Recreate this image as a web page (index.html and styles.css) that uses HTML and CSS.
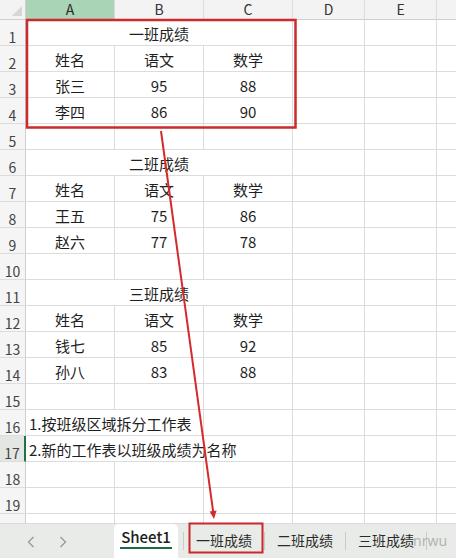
FILE: index.html
```html
<!DOCTYPE html>
<html lang="zh">
<head>
<meta charset="utf-8">
<title>Sheet</title>
<link rel="stylesheet" href="styles.css">
</head>
<body>
<div class="app">
  <div class="grid">
    <div class="corner"><span class="tri"></span></div>
    <div class="ch sel">A</div><div class="ch">B</div><div class="ch">C</div><div class="ch">D</div><div class="ch">E</div><div class="ch"></div>

    <div class="rh">1</div><div class="c m3">一班成绩</div><div class="c"></div><div class="c"></div><div class="c"></div>
    <div class="rh">2</div><div class="c">姓名</div><div class="c">语文</div><div class="c">数学</div><div class="c"></div><div class="c"></div><div class="c"></div>
    <div class="rh">3</div><div class="c">张三</div><div class="c">95</div><div class="c">88</div><div class="c"></div><div class="c"></div><div class="c"></div>
    <div class="rh">4</div><div class="c">李四</div><div class="c">86</div><div class="c">90</div><div class="c"></div><div class="c"></div><div class="c"></div>
    <div class="rh">5</div><div class="c"></div><div class="c"></div><div class="c"></div><div class="c"></div><div class="c"></div><div class="c"></div>
    <div class="rh">6</div><div class="c m3">二班成绩</div><div class="c"></div><div class="c"></div><div class="c"></div>
    <div class="rh">7</div><div class="c">姓名</div><div class="c">语文</div><div class="c">数学</div><div class="c"></div><div class="c"></div><div class="c"></div>
    <div class="rh">8</div><div class="c">王五</div><div class="c">75</div><div class="c">86</div><div class="c"></div><div class="c"></div><div class="c"></div>
    <div class="rh">9</div><div class="c">赵六</div><div class="c">77</div><div class="c">78</div><div class="c"></div><div class="c"></div><div class="c"></div>
    <div class="rh">10</div><div class="c"></div><div class="c"></div><div class="c"></div><div class="c"></div><div class="c"></div><div class="c"></div>
    <div class="rh">11</div><div class="c m3">三班成绩</div><div class="c"></div><div class="c"></div><div class="c"></div>
    <div class="rh">12</div><div class="c">姓名</div><div class="c">语文</div><div class="c">数学</div><div class="c"></div><div class="c"></div><div class="c"></div>
    <div class="rh">13</div><div class="c">钱七</div><div class="c">85</div><div class="c">92</div><div class="c"></div><div class="c"></div><div class="c"></div>
    <div class="rh">14</div><div class="c">孙八</div><div class="c">83</div><div class="c">88</div><div class="c"></div><div class="c"></div><div class="c"></div>
    <div class="rh">15</div><div class="c"></div><div class="c"></div><div class="c"></div><div class="c"></div><div class="c"></div><div class="c"></div>
    <div class="rh">16</div><div class="c m2 left">1.按班级区域拆分工作表</div><div class="c"></div><div class="c"></div><div class="c"></div><div class="c"></div>
    <div class="rh rsel">17</div><div class="c m3 left">2.新的工作表以班级成绩为名称</div><div class="c"></div><div class="c"></div><div class="c"></div>
    <div class="rh">18</div><div class="c"></div><div class="c"></div><div class="c"></div><div class="c"></div><div class="c"></div><div class="c"></div>
    <div class="rh">19</div><div class="c"></div><div class="c"></div><div class="c"></div><div class="c"></div><div class="c"></div><div class="c"></div>
    <div class="rh"></div><div class="c"></div><div class="c"></div><div class="c"></div><div class="c"></div><div class="c"></div><div class="c"></div>
  </div>

  <div class="tabbar">
    <div class="nav">
      <svg class="chev" width="8" height="12" viewBox="0 0 8 12"><path d="M6.5 1 L1.5 6 L6.5 11" fill="none" stroke="#9a9a9a" stroke-width="1.4"/></svg>
      <svg class="chev" width="8" height="12" viewBox="0 0 8 12"><path d="M1.5 1 L6.5 6 L1.5 11" fill="none" stroke="#9a9a9a" stroke-width="1.4"/></svg>
    </div>
    <div class="tab active"><span class="tabtext">Sheet1</span></div>
    <div class="sep"></div>
    <div class="tab">一班成绩</div>
    <div class="sep"></div>
    <div class="tab">二班成绩</div>
    <div class="sep"></div>
    <div class="tab">三班成绩</div>
    <div class="sep"></div>
    <span class="wm">nrwu</span>
  </div>

  <svg class="overlay" width="456" height="558" viewBox="0 0 456 558">
    <rect x="27" y="20" width="268.5" height="107.5" fill="none" stroke="#cc2a2c" stroke-width="2.5"/>
    <line x1="161" y1="131" x2="213.2" y2="512" stroke="#d42a2c" stroke-width="2"/>
    <polygon points="214,519 216.6,510.4 209.6,511.4" fill="#d42a2c"/>
    <rect x="189.5" y="523.5" width="73" height="29" fill="none" stroke="#c9282a" stroke-width="2"/>
  </svg>
</div>
</body>
</html>
```

FILE: styles.css
```css
* { box-sizing: border-box; }
html, body { margin: 0; padding: 0; background: #fff; }
body {
  font-family: "Noto Sans CJK SC", "Noto Sans", sans-serif;
  color: #1f1f1f;
}
.app {
  position: relative;
  width: 456px;
  height: 558px;
  overflow: hidden;
}
.grid {
  display: grid;
  grid-template-columns: 26px 89px 89px 89px 72px 72px 89px;
  grid-template-rows: 20px repeat(19, 26px) 10px;
  height: 524px;
  overflow: hidden;
}
.corner {
  position: relative;
  background: #f3f3f3;
  border-right: 1px solid #cfcfcf;
  border-bottom: 1px solid #cfcfcf;
}
.tri {
  position: absolute;
  right: 3px;
  bottom: 3px;
  width: 0;
  height: 0;
  border-left: 10px solid transparent;
  border-bottom: 10px solid #d6d6d6;
}
.ch {
  background: #f3f3f3;
  border-right: 1px solid #dcdcdc;
  border-bottom: 1px solid #cfcfcf;
  font-size: 14px;
  line-height: 19px;
  text-align: center;
  color: #333;
}
.ch.sel {
  background: #a9d5b6;
  color: #2b2b2b;
}
.rh {
  background: #f5f5f5;
  border-right: 1px solid #cfcfcf;
  border-bottom: 1px solid #dcdcdc;
  font-size: 14px;
  line-height: 16px;
  color: #444;
  display: flex;
  align-items: flex-end;
  justify-content: center;
  padding-bottom: 0;
}
.rh.rsel {
  background: #e4e6e4;
  border-right: 2px solid #217346;
}
.c {
  border-right: 1px solid #dcdcdc;
  border-bottom: 1px solid #dcdcdc;
  font-size: 15px;
  line-height: 20px;
  display: flex;
  align-items: flex-end;
  justify-content: center;
  padding-bottom: 1px;
  white-space: nowrap;
}
.c.m3 { grid-column: span 3; }
.c.m2 { grid-column: span 2; }
.c.left { justify-content: flex-start; padding-left: 3px; }

.tabbar {
  position: relative;
  height: 34px;
  background: #e8ebe8;
  display: flex;
  align-items: center;
}
.nav {
  width: 114px;
  display: flex;
  align-items: center;
  gap: 24px;
  padding-left: 27px;
  padding-top: 2px;
}
.tab {
  font-size: 14px;
  color: #2a2a2a;
  padding: 0 12px 0 12px;
  height: 34px;
  line-height: 32px;
  width: 80px;
  text-align: center;
}
.tab.active {
  width: 64px;
  padding: 0;
  background: #fff;
  border-radius: 5px 5px 0 0;
  font-size: 15px;
  font-weight: 500;
  color: #1d1d1d;
  display: flex;
  justify-content: center;
  margin-right: 5px;
}
.tabtext {
  display: block;
  height: 25px;
  line-height: 26px;
  border-bottom: 2px solid #1e6b43;
  padding: 0 1px;
}
.sep {
  width: 1px;
  height: 18px;
  background: #c9ccc9;
}
.wm {
  position: absolute;
  left: 413px;
  top: 7px;
  font-size: 14px;
  color: rgba(160, 160, 160, 0.75);
  font-family: "Noto Sans", sans-serif;
}
.overlay {
  position: absolute;
  left: 0;
  top: 0;
  pointer-events: none;
}
```
